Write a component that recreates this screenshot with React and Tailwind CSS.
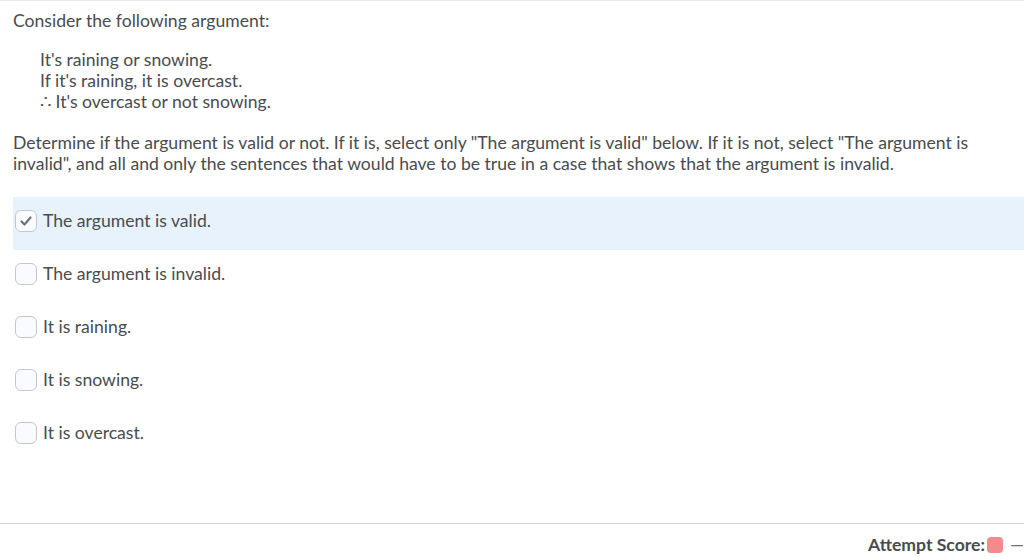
import React from 'react';

const options = [
  { label: 'The argument is valid.', checked: true },
  { label: 'The argument is invalid.', checked: false },
  { label: 'It is raining.', checked: false },
  { label: 'It is snowing.', checked: false },
  { label: 'It is overcast.', checked: false },
];

const CheckBox = ({ checked }) => (
  <span className="w-[22px] h-[22px] shrink-0 rounded-[6px] border border-[#c4c7ca] bg-[#f9fbff] flex items-center justify-center">
    {checked && (
      <svg width="14" height="14" viewBox="0 0 14 14" fill="none">
        <path d="M2.5 7.5 L5.5 10.5 L11.5 3.5" stroke="#6e7376" strokeWidth="2.2" strokeLinecap="round" strokeLinejoin="round" />
      </svg>
    )}
  </span>
);

export default function App() {
  return (
    <div className="w-[1024px] h-[557px] bg-white text-[#494c4e] font-['Lato','Open_Sans',sans-serif] text-[17.6px] leading-[21px] flex flex-col overflow-hidden">
      <div className="h-px bg-[#e6e6e6]" />
      <div className="flex-1 pl-[13px]">
        <p className="mt-[9px]">Consider the following argument:</p>
        <div className="mt-[18px] pl-[27px]">
          <p>It's raining or snowing.</p>
          <p>If it's raining, it is overcast.</p>
          <p>∴ It's overcast or not snowing.</p>
        </div>
        <p className="mt-[20px] pr-[40px]">
          Determine if the argument is valid or not. If it is, select only "The argument is valid" below. If it is not, select "The argument is invalid", and all and only the sentences that would have to be true in a case that shows that the argument is invalid.
        </p>
        <div className="mt-[23px] flex flex-col">
          {options.map((o) => (
            <div
              key={o.label}
              className={`h-[53px] flex items-center gap-[6px] pl-[2px] pb-[6px] ${o.checked ? 'bg-[#e8f2fd]' : ''}`}
            >
              <CheckBox checked={o.checked} />
              <span>{o.label}</span>
            </div>
          ))}
        </div>
      </div>
      <div className="h-px bg-[#d3d3d3]" />
      <div className="h-[33px] flex items-center justify-end pt-[8px]">
        <span className="font-bold">Attempt Score:</span>
        <span className="w-[16px] h-[16px] rounded-[4px] bg-[#f38b8d] ml-[2px]" />
        <span className="ml-[7px] text-[#6e7376]">—</span>
      </div>
    </div>
  );
}
